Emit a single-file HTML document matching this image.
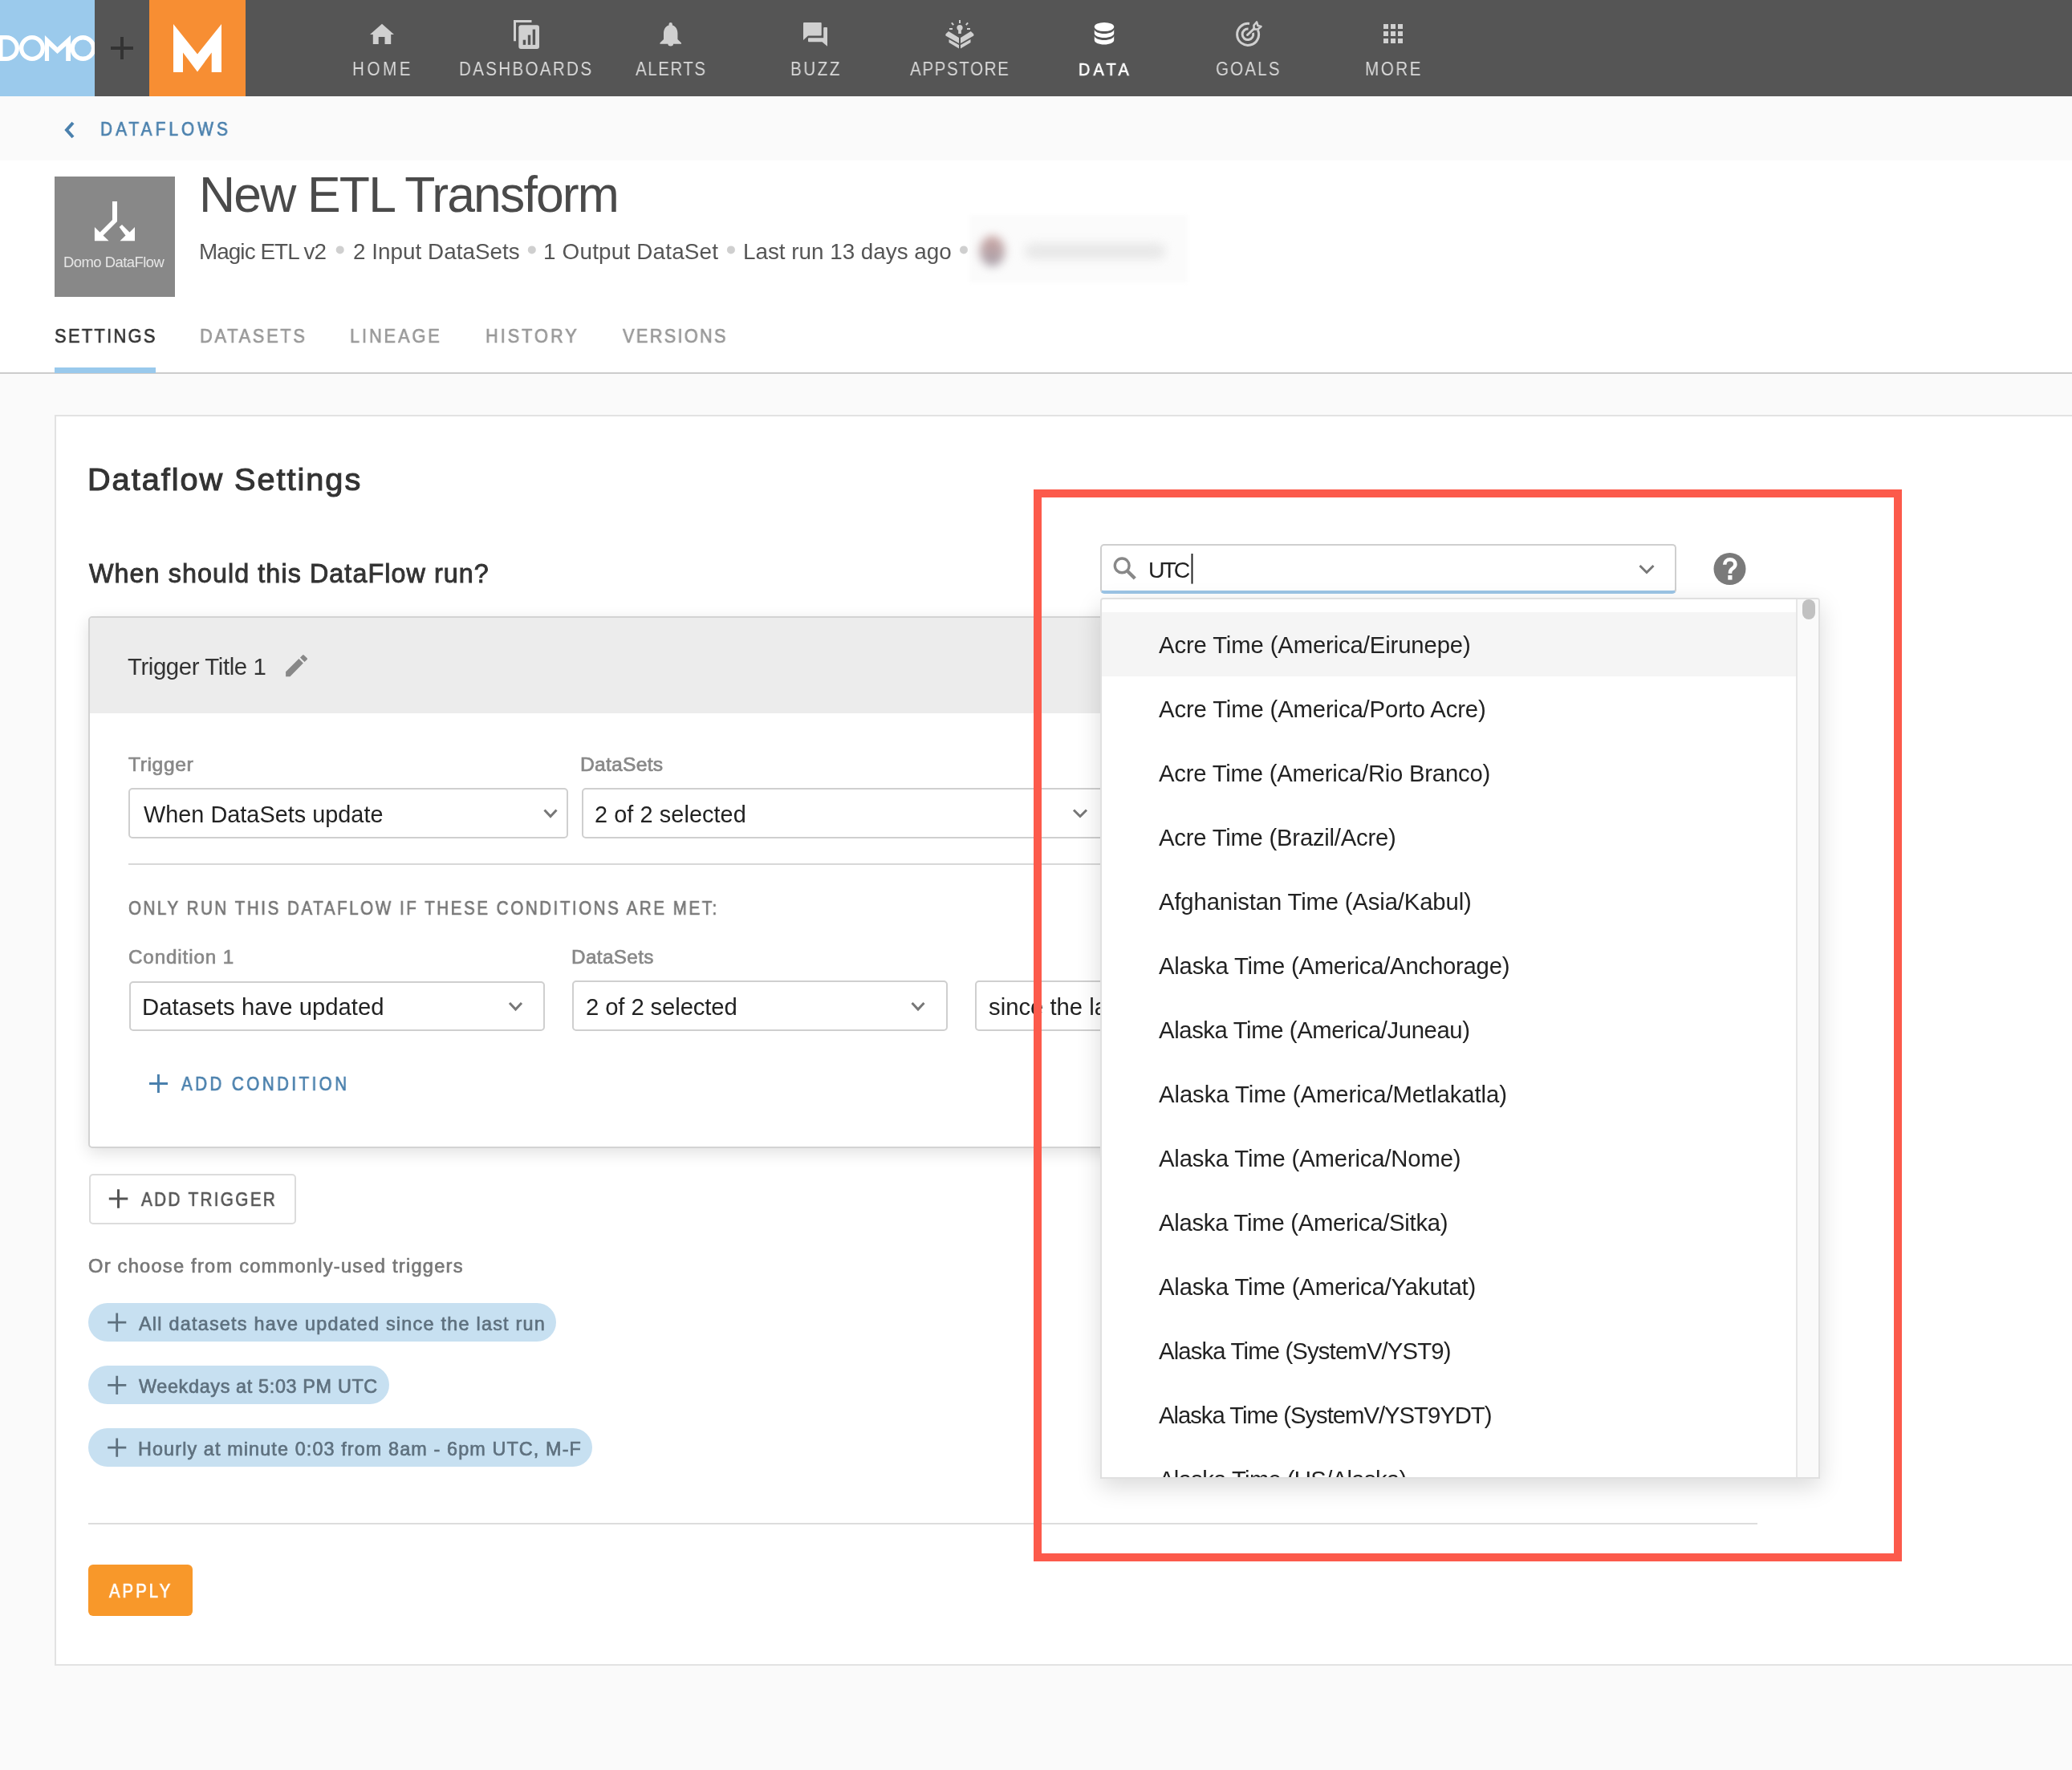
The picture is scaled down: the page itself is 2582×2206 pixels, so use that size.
<!DOCTYPE html>
<html><head><meta charset="utf-8"><title>New ETL Transform</title>
<style>
html,body{margin:0;padding:0;}
body{width:2582px;height:2206px;position:relative;overflow:hidden;background:#fafafa;font-family:"Liberation Sans",sans-serif;}
.a{position:absolute;box-sizing:border-box;}
.t{position:absolute;white-space:nowrap;line-height:1;will-change:transform;}
svg{position:absolute;overflow:visible;}
</style></head><body>
<!-- top nav -->
<div class="a" style="left:0;top:0;width:2582px;height:120px;background:#555555"></div>
<div class="a" style="left:0;top:0;width:118px;height:120px;background:#9bcaec;overflow:hidden">
 <svg width="118" height="120" style="left:0;top:0" viewBox="0 0 118 120">
  <path fill="#fff" fill-rule="evenodd" d="M-20,44H8A16,16 0 0 1 8,76H-20Z M3.5,49.3H8A10.7,10.7 0 0 1 8,70.7H3.5Z"/>
  <path fill="#fff" fill-rule="evenodd" d="M24,60a16,16 0 1 0 32,0a16,16 0 1 0 -32,0Z M29.3,60a10.7,10.7 0 1 0 21.4,0a10.7,10.7 0 1 0 -21.4,0Z"/>
  <path fill="#fff" d="M55.9,43.9L71.5,59L88,43.9V76H82.2V57.2L71.5,67L61.1,57.2V76H55.9Z"/>
  <path fill="#fff" fill-rule="evenodd" d="M87.4,60a16,16 0 1 0 32,0a16,16 0 1 0 -32,0Z M92.9,60a10.5,10.5 0 1 0 21,0a10.5,10.5 0 1 0 -21,0Z"/>
 </svg>
</div>
<div class="a" style="left:138px;top:58px;width:28px;height:4px;background:#333"></div>
<div class="a" style="left:150px;top:46px;width:4px;height:28px;background:#333"></div>
<div class="a" style="left:186px;top:0;width:120px;height:120px;background:#f78e33"></div>
<svg width="2582" height="120" style="left:0;top:0">
 <path fill="#fff" d="M216,30L246,67.5L276,30V90H263.7V65.4L246,89.5L228,65.4V90H216Z"/>
 <!-- home -->
 <path fill="#d0d0d0" d="M476,29.7L461,43H464.8V55H471.7V46H479.5V55H487.2V43H491Z"/>
 <!-- dashboards -->
 <path fill="#d0d0d0" d="M640,25H662.5V28H643V51.3H640Z"/>
 <rect x="646.3" y="31.2" width="25.7" height="29.8" rx="3" fill="#d0d0d0"/>
 <rect x="651.7" y="49.7" width="3.4" height="6.2" fill="#555"/>
 <rect x="657.8" y="43.6" width="3.4" height="12.3" fill="#555"/>
 <rect x="663.7" y="36.6" width="3.4" height="19.3" fill="#555"/>
 <!-- bell -->
 <path fill="#d0d0d0" d="M835.7,28a2.2,2.2 0 0 1 2.2,2.2v1.3c4.5,1.3 6.5,5.5 6.5,10v7.5l4.6,4.5v1.2h-26.6v-1.2l4.6,-4.5v-7.5c0,-4.5 2,-8.7 6.5,-10v-1.3a2.2,2.2 0 0 1 2.2,-2.2Z M832.2,54h7a3.5,3.5 0 0 1 -7,0Z"/>
 <!-- buzz -->
 <path fill="#d0d0d0" d="M1001,29a1,1 0 0 1 1,-1H1022.7a1,1 0 0 1 1,1V43.6a1,1 0 0 1 -1,1H1007L1001,50Z"/>
 <path fill="#d0d0d0" d="M1026.2,35a1,1 0 0 1 1,-1H1030a1,1 0 0 1 1,1V57.7L1024.5,52.3H1008a1,1 0 0 1 -1,-1V48.3a1,1 0 0 1 1,-1H1026.2Z"/>
 <!-- appstore -->
 <g fill="#d0d0d0">
  <circle cx="1196" cy="34.5" r="3.6"/><rect x="1194.2" y="36" width="3.6" height="6"/>
  <rect x="1195" y="25" width="2" height="4"/>
  <rect x="1186" y="28" width="2" height="3.5" transform="rotate(-40 1187 29.7)"/>
  <rect x="1204" y="28" width="2" height="3.5" transform="rotate(40 1205 29.7)"/>
  <rect x="1183" y="35" width="4" height="2"/><rect x="1205" y="35" width="4" height="2"/>
  <path d="M1178.4,42.5L1182,39L1195,47V54L1178.4,44.5Z"/>
  <path d="M1213.4,42.5L1209.8,39L1197,47V54L1213.4,44.5Z"/>
  <path d="M1182.5,49L1195,56V60.6L1182.5,53Z"/>
  <path d="M1209.5,49L1197,56V60.6L1209.5,53Z"/>
 </g>
 <!-- data (db) -->
 <g fill="#ffffff">
  <ellipse cx="1376" cy="33.5" rx="12.2" ry="5.5"/>
  <path d="M1363.8,36.5c0,3 5.5,5.5 12.2,5.5s12.2,-2.5 12.2,-5.5v5c0,3 -5.5,5.5 -12.2,5.5s-12.2,-2.5 -12.2,-5.5Z"/>
  <path d="M1363.8,44.5c0,3 5.5,5.5 12.2,5.5s12.2,-2.5 12.2,-5.5v5.5c0,3 -5.5,5.5 -12.2,5.5s-12.2,-2.5 -12.2,-5.5Z"/>
 </g>
 <!-- goals -->
 <g fill="none" stroke="#d0d0d0" stroke-width="3">
  <path d="M1567.5,37.5A13.5,13.5 0 1 1 1557,29.5"/>
  <path d="M1561.5,41A6.8,6.8 0 1 1 1555.5,36"/>
  <path d="M1554.5,43.5L1563,35.5" stroke-linecap="round"/>
 </g>
 <path fill="none" stroke="#d0d0d0" stroke-width="2.6" stroke-linejoin="round" d="M1562.5,36.5V31.5L1566,27.5L1567.5,32L1571.5,33L1567.5,36.5Z"/>
 <!-- more -->
 <g fill="#d0d0d0">
  <rect x="1724" y="30" width="6" height="6"/><rect x="1733" y="30" width="6" height="6"/><rect x="1742" y="30" width="6" height="6"/>
  <rect x="1724" y="39" width="6" height="6"/><rect x="1733" y="39" width="6" height="6"/><rect x="1742" y="39" width="6" height="6"/>
  <rect x="1724" y="48" width="6" height="6"/><rect x="1733" y="48" width="6" height="6"/><rect x="1742" y="48" width="6" height="6"/>
 </g>
</svg>
<!-- header -->
<div class="a" style="left:0;top:200px;width:2582px;height:264px;background:#ffffff"></div>
<div class="a" style="left:0;top:464px;width:2582px;height:2px;background:#cccccc"></div>
<div class="a" style="left:68px;top:458px;width:126px;height:7px;background:#99c9ec"></div>
<svg width="200" height="60" style="left:0;top:140px">
 <path d="M91,13L83,22L91,31" fill="none" stroke="#4a80ad" stroke-width="4"/>
</svg>
<div class="a" style="left:68px;top:220px;width:150px;height:150px;background:#888888"></div>
<svg width="2582" height="400" style="left:0;top:0">
 <path fill="#fff" d="M140,251H146V276L128.5,293.5L135.6,300.3H117.9V283L124.5,289.5L140,274Z"/>
 <path fill="#fff" d="M148.6,283L152,280L161.5,289.5L168,283V300.3H149.5L156.5,293.5Z"/>
 <circle cx="423.7" cy="311.4" r="5" fill="#cfcfcf"/>
 <circle cx="662.8" cy="311.4" r="5" fill="#cfcfcf"/>
 <circle cx="910.9" cy="311.4" r="5" fill="#cfcfcf"/>
 <circle cx="1201" cy="311.4" r="5" fill="#cfcfcf"/>
</svg>
<!-- blurred avatar/name -->
<div class="a" style="left:1208px;top:268px;width:272px;height:84px;background:#fbfbfb;filter:blur(2px)"></div>
<div class="a" style="left:1221px;top:294px;width:31px;height:38px;border-radius:50%;background:linear-gradient(#c9a3a0,#a9a3ad);filter:blur(6px)"></div>
<div class="a" style="left:1277px;top:303px;width:175px;height:20px;border-radius:10px;background:#e8e8e8;filter:blur(6px)"></div>
<!-- settings card -->
<div class="a" style="left:68px;top:517px;width:2600px;height:1559px;background:#fff;border:2px solid #e2e2e2"></div>
<!-- trigger card -->
<div class="a" style="left:110px;top:768px;width:2080px;height:663px;background:#fff;border:2px solid #d3d3d3;border-radius:5px;box-shadow:0 6px 20px rgba(0,0,0,0.12);overflow:hidden">
  <div class="a" style="left:0;top:0;width:100%;height:119px;background:#ececec"></div>
</div>
<svg width="2582" height="2206" style="left:0;top:0">
 <!-- pencil -->
 <path fill="#888" d="M356.1,837.3L372.4,821.1L377.9,826.6L361.4,843.2H356.1Z M374,819.6L377.1,816.4a1.2,1.2 0 0 1 1.6,0L382.7,820.3a1.2,1.2 0 0 1 0,1.6L379.5,825.1Z"/>
</svg>
<!-- selects -->
<div class="a" style="left:160px;top:982px;width:548px;height:63px;border:2px solid #cfcfcf;border-radius:5px;background:#fff"></div>
<div class="a" style="left:725px;top:982px;width:700px;height:63px;border:2px solid #cfcfcf;border-radius:5px;background:#fff"></div>
<div class="a" style="left:160px;top:1076px;width:2030px;height:2px;background:#d8d8d8"></div>
<div class="a" style="left:161px;top:1223px;width:518px;height:62px;border:2px solid #cfcfcf;border-radius:5px;background:#fff"></div>
<div class="a" style="left:713px;top:1222px;width:468px;height:63px;border:2px solid #cfcfcf;border-radius:5px;background:#fff"></div>
<div class="a" style="left:1215px;top:1222px;width:400px;height:63px;border:2px solid #cfcfcf;border-radius:5px;background:#fff"></div>
<svg width="2582" height="2206" style="left:0;top:0">
 <g fill="none" stroke="#777" stroke-width="3">
  <path d="M678.5,1009.5L686,1017.5L693.5,1009.5"/>
  <path d="M1338,1009.5L1346,1017.5L1354,1009.5"/>
  <path d="M635,1250L642.5,1258L650,1250"/>
  <path d="M1136.5,1250L1144,1258L1151.5,1250"/>
 </g>
 <g stroke="#4a80ad" stroke-width="3"><path d="M197.4,1339V1362M186,1350.5H209"/></g>
 <g stroke="#555" stroke-width="3"><path d="M147.5,1482.3V1505.7M135.8,1494H159.3"/></g>
</svg>
<!-- add trigger button -->
<div class="a" style="left:111px;top:1463px;width:258px;height:62.5px;border:2px solid #dcdcdc;border-radius:5px"></div>
<!-- pills -->
<div class="a" style="left:110px;top:1624px;width:583px;height:48px;border-radius:24px;background:#c7e0f1"></div>
<div class="a" style="left:110px;top:1702px;width:375px;height:47.5px;border-radius:24px;background:#c7e0f1"></div>
<div class="a" style="left:110px;top:1780px;width:628px;height:47.5px;border-radius:24px;background:#c7e0f1"></div>
<svg width="2582" height="2206" style="left:0;top:0">
 <g stroke="#5e707e" stroke-width="2.8">
  <path d="M145.7,1636.6V1659.8M134.2,1648.2H157.3"/>
  <path d="M145.7,1714.7V1737.9M134.2,1726.3H157.3"/>
  <path d="M145.7,1792.6V1815.8M134.2,1804.2H157.3"/>
 </g>
</svg>
<div class="a" style="left:110px;top:1898px;width:2080px;height:2px;background:#dddddd"></div>
<div class="a" style="left:110px;top:1950px;width:130px;height:64px;border-radius:6px;background:#f8982a"></div>
<div class="t" style="left:439.1px;top:75.0px;font-size:23.48px;font-weight:400;color:#d9d9d9;letter-spacing:3.98px;transform:scaleX(0.88);transform-origin:0 0;">HOME</div>
<div class="t" style="left:572.1px;top:75.0px;font-size:23.48px;font-weight:400;color:#d9d9d9;letter-spacing:2.58px;transform:scaleX(0.88);transform-origin:0 0;">DASHBOARDS</div>
<div class="t" style="left:791.6px;top:75.0px;font-size:23.48px;font-weight:400;color:#d9d9d9;letter-spacing:1.59px;transform:scaleX(0.88);transform-origin:0 0;">ALERTS</div>
<div class="t" style="left:984.5px;top:75.0px;font-size:23.48px;font-weight:400;color:#d9d9d9;letter-spacing:2.86px;transform:scaleX(0.88);transform-origin:0 0;">BUZZ</div>
<div class="t" style="left:1133.6px;top:75.0px;font-size:23.48px;font-weight:400;color:#d9d9d9;letter-spacing:1.75px;transform:scaleX(0.88);transform-origin:0 0;">APPSTORE</div>
<div class="t" style="left:1515.4px;top:75.0px;font-size:23.48px;font-weight:400;color:#d9d9d9;letter-spacing:2.36px;transform:scaleX(0.88);transform-origin:0 0;">GOALS</div>
<div class="t" style="left:1700.7px;top:75.0px;font-size:23.48px;font-weight:400;color:#d9d9d9;letter-spacing:2.84px;transform:scaleX(0.88);transform-origin:0 0;">MORE</div>
<div class="t" style="left:1343.8px;top:76.0px;font-size:22.56px;font-weight:400;color:#ffffff;letter-spacing:4.83px;-webkit-text-stroke:0.63px #ffffff;transform:scaleX(0.88);transform-origin:0 0;">DATA</div>
<div class="t" style="left:125.0px;top:150.0px;font-size:23.68px;font-weight:400;color:#4a80ad;letter-spacing:4.58px;-webkit-text-stroke:0.66px #4a80ad;transform:scaleX(0.88);transform-origin:0 0;">DATAFLOWS</div>
<div class="t" style="left:247.8px;top:211.0px;font-size:62.46px;font-weight:400;color:#4a4a4a;letter-spacing:-1.82px;">New ETL Transform</div>
<div class="t" style="left:247.5px;top:300.0px;font-size:27.83px;font-weight:400;color:#555555;letter-spacing:-0.92px;">Magic ETL v2</div>
<div class="t" style="left:439.8px;top:300.0px;font-size:27.83px;font-weight:400;color:#555555;letter-spacing:0.03px;">2 Input DataSets</div>
<div class="t" style="left:677.0px;top:300.0px;font-size:27.83px;font-weight:400;color:#555555;letter-spacing:0.20px;">1 Output DataSet</div>
<div class="t" style="left:925.9px;top:300.0px;font-size:27.83px;font-weight:400;color:#555555;letter-spacing:-0.01px;">Last run 13 days ago</div>
<div class="t" style="left:78.5px;top:318.0px;font-size:18.41px;font-weight:400;color:#e6e6e6;letter-spacing:-0.51px;">Domo DataFlow</div>
<div class="t" style="left:67.5px;top:407.0px;font-size:24.79px;font-weight:400;color:#333333;letter-spacing:2.66px;-webkit-text-stroke:0.69px #333333;transform:scaleX(0.88);transform-origin:0 0;">SETTINGS</div>
<div class="t" style="left:249.2px;top:407.0px;font-size:24.79px;font-weight:400;color:#999999;letter-spacing:3.09px;-webkit-text-stroke:0.69px #999999;transform:scaleX(0.88);transform-origin:0 0;">DATASETS</div>
<div class="t" style="left:436.3px;top:407.0px;font-size:24.79px;font-weight:400;color:#999999;letter-spacing:3.27px;-webkit-text-stroke:0.69px #999999;transform:scaleX(0.88);transform-origin:0 0;">LINEAGE</div>
<div class="t" style="left:605.4px;top:407.0px;font-size:24.79px;font-weight:400;color:#999999;letter-spacing:3.33px;-webkit-text-stroke:0.69px #999999;transform:scaleX(0.88);transform-origin:0 0;">HISTORY</div>
<div class="t" style="left:776.0px;top:407.0px;font-size:24.79px;font-weight:400;color:#999999;letter-spacing:2.58px;-webkit-text-stroke:0.69px #999999;transform:scaleX(0.88);transform-origin:0 0;">VERSIONS</div>
<div class="t" style="left:108.7px;top:578.0px;font-size:39.69px;font-weight:400;color:#333333;letter-spacing:1.97px;-webkit-text-stroke:1.11px #333333;">Dataflow Settings</div>
<div class="t" style="left:110.8px;top:699.0px;font-size:32.31px;font-weight:400;color:#333333;letter-spacing:1.07px;-webkit-text-stroke:0.90px #333333;">When should this DataFlow run?</div>
<div class="t" style="left:158.6px;top:816.0px;font-size:29.42px;font-weight:400;color:#333333;letter-spacing:-0.42px;">Trigger Title 1</div>
<div class="t" style="left:160.3px;top:941.0px;font-size:24.65px;font-weight:400;color:#888888;letter-spacing:0.60px;-webkit-text-stroke:0.69px #888888;">Trigger</div>
<div class="t" style="left:723.3px;top:941.0px;font-size:24.65px;font-weight:400;color:#888888;letter-spacing:0.24px;-webkit-text-stroke:0.69px #888888;">DataSets</div>
<div class="t" style="left:178.5px;top:1001.0px;font-size:28.84px;font-weight:400;color:#222222;letter-spacing:0.02px;">When DataSets update</div>
<div class="t" style="left:741.2px;top:1001.0px;font-size:28.84px;font-weight:400;color:#222222;letter-spacing:0.09px;">2 of 2 selected</div>
<div class="t" style="left:160.0px;top:1121.0px;font-size:23.4px;font-weight:400;color:#777777;letter-spacing:2.89px;-webkit-text-stroke:0.66px #777777;transform:scaleX(0.88);transform-origin:0 0;">ONLY RUN THIS DATAFLOW IF THESE CONDITIONS ARE MET:</div>
<div class="t" style="left:159.9px;top:1181.0px;font-size:24.23px;font-weight:400;color:#888888;letter-spacing:0.86px;-webkit-text-stroke:0.68px #888888;">Condition 1</div>
<div class="t" style="left:712.0px;top:1181.0px;font-size:24.23px;font-weight:400;color:#888888;letter-spacing:0.40px;-webkit-text-stroke:0.68px #888888;">DataSets</div>
<div class="t" style="left:177.1px;top:1240.0px;font-size:29.28px;font-weight:400;color:#222222;letter-spacing:0.03px;">Datasets have updated</div>
<div class="t" style="left:729.5px;top:1240.0px;font-size:29.28px;font-weight:400;color:#222222;letter-spacing:-0.11px;">2 of 2 selected</div>
<div class="t" style="left:1232.0px;top:1240.0px;font-size:29.28px;font-weight:400;color:#222222;letter-spacing:0.00px;">since the last run</div>
<div class="t" style="left:226.3px;top:1340.0px;font-size:23.4px;font-weight:400;color:#4a80ad;letter-spacing:3.91px;-webkit-text-stroke:0.66px #4a80ad;transform:scaleX(0.88);transform-origin:0 0;">ADD CONDITION</div>
<div class="t" style="left:176.4px;top:1484.0px;font-size:23.54px;font-weight:400;color:#555555;letter-spacing:2.66px;-webkit-text-stroke:0.66px #555555;transform:scaleX(0.88);transform-origin:0 0;">ADD TRIGGER</div>
<div class="t" style="left:110.2px;top:1567.0px;font-size:23.68px;font-weight:400;color:#777777;letter-spacing:1.23px;-webkit-text-stroke:0.66px #777777;">Or choose from commonly-used triggers</div>
<div class="t" style="left:172.5px;top:1639.0px;font-size:23.4px;font-weight:400;color:#5e707e;letter-spacing:1.24px;-webkit-text-stroke:0.66px #5e707e;">All datasets have updated since the last run</div>
<div class="t" style="left:172.5px;top:1717.0px;font-size:23.4px;font-weight:400;color:#5e707e;letter-spacing:0.65px;-webkit-text-stroke:0.66px #5e707e;">Weekdays at 5:03 PM UTC</div>
<div class="t" style="left:171.5px;top:1795.0px;font-size:23.4px;font-weight:400;color:#5e707e;letter-spacing:1.11px;-webkit-text-stroke:0.66px #5e707e;">Hourly at minute 0:03 from 8am - 6pm UTC, M-F</div>
<div class="t" style="left:136.4px;top:1972.0px;font-size:23.12px;font-weight:400;color:#ffffff;letter-spacing:3.44px;-webkit-text-stroke:0.65px #ffffff;transform:scaleX(0.88);transform-origin:0 0;">APPLY</div>
<!-- dropdown overlay -->
<div class="a" style="left:1371px;top:678px;width:718px;height:62px;border:2px solid #cfcfcf;border-bottom:4px solid #9cc5e6;border-radius:5px;background:#fff"></div>
<svg width="2582" height="2206" style="left:0;top:0">
 <g fill="none" stroke="#888" stroke-width="3.8">
  <circle cx="1398.2" cy="704.9" r="8.9" stroke-width="3.4"/>
  <path d="M1405.2,712L1414.3,721" stroke-width="4.4"/>
 </g>
 <rect x="1484.5" y="690" width="2" height="37.6" fill="#222"/>
 <path d="M2043.5,705L2052,713.5L2060.5,705" fill="none" stroke="#777" stroke-width="3"/>
 <circle cx="2155.5" cy="709" r="20" fill="#7a7a7a"/>
</svg>
<div class="t" style="left:1431.4px;top:696.0px;font-size:28.41px;font-weight:400;color:#222222;letter-spacing:-3.12px;">UTC</div>
<svg width="2582" height="800" style="left:0;top:0"><path d="M2149.2,703.8c0,-3.9 2.9,-6.6 6.6,-6.6c3.8,0 6.6,2.5 6.6,6c0,2.6 -1.5,4 -3.2,5.2c-1.9,1.4 -3.2,2.4 -3.2,4.8v1.6" fill="none" stroke="#fff" stroke-width="4.6"/><rect x="2153.3" y="717" width="5.2" height="5.6" fill="#fff"/></svg>
<div class="a" style="left:1371px;top:745px;width:897px;height:1098px;background:#fff;border:2px solid #e0e0e0;border-radius:4px 4px 0 0;box-shadow:0 10px 30px rgba(0,0,0,0.15);overflow:hidden">
 <div class="a" style="left:0;top:16px;width:865px;height:80px;background:#f5f5f5"></div>
 <div class="a" style="left:865px;top:0;width:30px;height:2000px;background:#fafafa;border-left:2px solid #e6e6e6"></div>
 <div class="a" style="left:873px;top:0;width:16px;height:25px;border-radius:8px;background:#c1c1c1"></div>
 <div class="t" style="left:70.8px;top:42.0px;font-size:29.28px;font-weight:400;color:#222222;letter-spacing:-0.12px;">Acre Time (America/Eirunepe)</div>
<div class="t" style="left:70.8px;top:122.0px;font-size:29.28px;font-weight:400;color:#222222;letter-spacing:-0.13px;">Acre Time (America/Porto Acre)</div>
<div class="t" style="left:70.8px;top:202.0px;font-size:29.28px;font-weight:400;color:#222222;letter-spacing:-0.22px;">Acre Time (America/Rio Branco)</div>
<div class="t" style="left:70.8px;top:282.0px;font-size:29.28px;font-weight:400;color:#222222;letter-spacing:-0.23px;">Acre Time (Brazil/Acre)</div>
<div class="t" style="left:70.8px;top:362.0px;font-size:29.28px;font-weight:400;color:#222222;letter-spacing:-0.14px;">Afghanistan Time (Asia/Kabul)</div>
<div class="t" style="left:70.8px;top:442.0px;font-size:29.28px;font-weight:400;color:#222222;letter-spacing:-0.22px;">Alaska Time (America/Anchorage)</div>
<div class="t" style="left:70.8px;top:522.0px;font-size:29.28px;font-weight:400;color:#222222;letter-spacing:-0.39px;">Alaska Time (America/Juneau)</div>
<div class="t" style="left:70.8px;top:602.0px;font-size:29.28px;font-weight:400;color:#222222;letter-spacing:-0.06px;">Alaska Time (America/Metlakatla)</div>
<div class="t" style="left:70.8px;top:682.0px;font-size:29.28px;font-weight:400;color:#222222;letter-spacing:-0.16px;">Alaska Time (America/Nome)</div>
<div class="t" style="left:70.8px;top:762.0px;font-size:29.28px;font-weight:400;color:#222222;letter-spacing:-0.27px;">Alaska Time (America/Sitka)</div>
<div class="t" style="left:70.8px;top:842.0px;font-size:29.28px;font-weight:400;color:#222222;letter-spacing:-0.15px;">Alaska Time (America/Yakutat)</div>
<div class="t" style="left:70.8px;top:922.0px;font-size:29.28px;font-weight:400;color:#222222;letter-spacing:-0.84px;">Alaska Time (SystemV/YST9)</div>
<div class="t" style="left:70.8px;top:1002.0px;font-size:29.28px;font-weight:400;color:#222222;letter-spacing:-1.02px;">Alaska Time (SystemV/YST9YDT)</div>
<div class="t" style="left:70.8px;top:1082.0px;font-size:29.28px;font-weight:400;color:#222222;letter-spacing:-0.65px;">Alaska Time (US/Alaska)</div>
</div>
<!-- red annotation box -->
<div class="a" style="left:1288px;top:610px;width:1082px;height:1336px;border:10px solid #fc5a4b"></div>
</body></html>
